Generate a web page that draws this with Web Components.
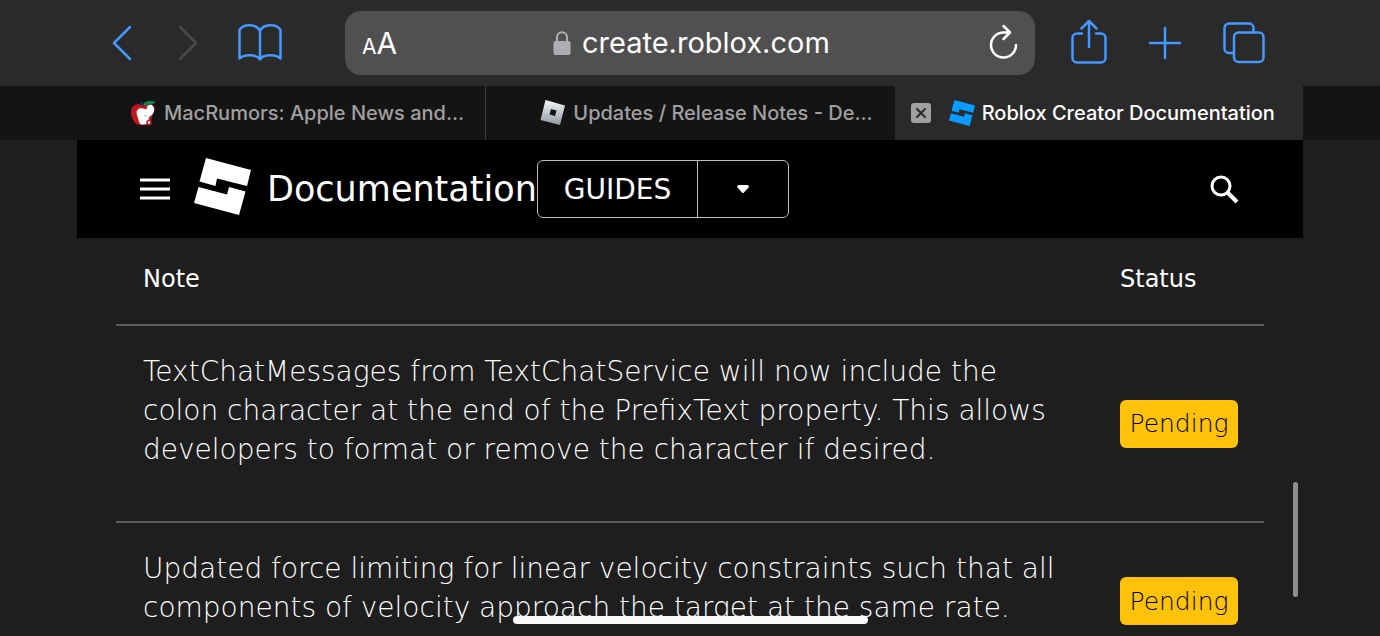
<!DOCTYPE html>
<html lang="en">
<head>
<meta charset="utf-8">
<meta name="viewport" content="width=device-width, initial-scale=1">
<title>Roblox Creator Documentation</title>
<style>
  html, body { margin: 0; height: 100%; }
  body {
    background: #1e1e1e; color: #fff;
    font-family: Inter, "Liberation Sans", sans-serif;
    --docs-font: "DejaVu Sans", sans-serif;
    --safe: 77px; --blue: #4698ff; --bar: #2a2a2a;
  }
</style>
</head>
<body>
<browser-window>
  <browser-toolbar slot="toolbar" address="create.roblox.com"></browser-toolbar>
  <tab-strip slot="tabs">
    <browser-tab icon="apple">MacRumors: Apple News and...</browser-tab>
    <browser-tab icon="roblox">Updates / Release Notes - De...</browser-tab>
    <browser-tab icon="studio" active>Roblox Creator Documentation</browser-tab>
  </tab-strip>
  <docs-header>Documentation</docs-header>
  <release-notes></release-notes>
</browser-window>

<script>
const attach = (el, html) => { el.attachShadow({ mode: 'open' }).innerHTML = html; };
const RESET = `
  *, *::before { box-sizing: border-box; }
  button { font: inherit; color: inherit; background: none; border: 0; padding: 0; margin: 0; cursor: pointer; display: flex; align-items: center; justify-content: center; }
  svg { display: block; flex: none; overflow: visible; }
`;
const STUDIO = 'M12 0 57 12 53 28 23 20.500 21.500 28 5.500 23.500ZM4.500 29 33 36.500 35 29 51.500 33.500 45 57 0 45Z';

customElements.define('browser-window', class extends HTMLElement {
  constructor() {
    super();
    attach(this, `<style>${RESET}
      :host { display: flex; flex-direction: column; height: 100vh; overflow: hidden; position: relative; }
      main { flex: 1; min-height: 0; overflow: hidden; margin: 0 var(--safe); position: relative; }
      .thumb { position: absolute; right: 5px; top: 342px; width: 5px; height: 115px; border-radius: 3px; background: #8e8e8e; }
      .home { position: absolute; left: 50%; bottom: 12px; width: 355px; height: 8px; margin-left: -177px; border-radius: 4px; background: #fafafa; }
    </style>
    <slot name="toolbar"></slot><slot name="tabs"></slot>
    <main><slot></slot><div class="thumb"></div></main>
    <div class="home"></div>`);
  }
});

customElements.define('browser-toolbar', class extends HTMLElement {
  constructor() {
    super();
    attach(this, `<style>${RESET}
      :host { display: grid; grid-template-columns: 1fr 50vw 1fr; align-items: center; height: 86px; flex: none; background: var(--bar); padding: 0 110px; box-sizing: border-box; }
      .side { display: flex; align-items: center; color: var(--blue); }
      .left { gap: 40px; } .right { gap: 42px; padding-right: 5px; justify-content: flex-end; }
      svg { fill: none; stroke: currentColor; stroke-width: 2.500; stroke-linecap: round; stroke-linejoin: round; }
      .off { color: #4a4a4a; }
      form { height: 64px; background: #505050; border-radius: 16px; display: grid; grid-template-columns: 1fr auto 1fr; align-items: center; padding: 0 17px; margin: 0; }
      .size { justify-self: start; align-items: baseline; font-size: 30px; }
      .size small { font-size: 21px; }
      .reload { justify-self: end; }
      .url { display: flex; align-items: center; gap: 11px; padding-left: 3px; }
      input { font: inherit; font-size: 29px; color: #fff; background: none; border: 0; padding: 0 0 2px; width: 248px; height: 40px; outline: none; }
    </style>
    <div class="side left">
      <button aria-label="Back"><svg width="27" height="36" viewBox="0 0 27 36"><path d="M20 2 4 18 20 34"/></svg></button>
      <button class="off" aria-label="Forward"><svg width="21" height="36" viewBox="0 0 21 36"><path d="M3 2 19 18 3 34"/></svg></button>
      <button aria-label="Bookmarks"><svg width="44" height="38" viewBox="0 0 44 38"><path d="M22 7C19 0 6-1 1.500 6V34.500C6 30 19 30 22 35.500 25 30 38 30 42.500 34.500V6C38-1 25 0 22 7ZM22 7V35.500"/></svg></button>
    </div>
    <form>
      <button type="button" class="size" aria-label="Page settings"><small>A</small>A</button>
      <div class="url">
        <svg width="18" height="24" viewBox="0 0 18 24" style="color:#aeaeb2"><path d="M4 11V6.500C4-.5 14-.5 14 6.500V11" stroke-width="2"/><rect x=".5" y="10" width="17" height="14" rx="2" fill="currentColor" stroke="none"/></svg>
        <input type="text" aria-label="Address" spellcheck="false">
      </div>
      <button type="button" class="reload" aria-label="Reload"><svg width="29" height="34" viewBox="0 0 29 34"><path d="M20 6.500H14.500A12.500 12.500 0 1 0 27 19M14.500 0 21 6.500 14.500 13"/></svg></button>
    </form>
    <div class="side right">
      <button aria-label="Share"><svg width="36" height="44" viewBox="0 0 36 44"><path d="M11 12.500H6A4.500 4.500 0 0 0 1.500 17V37A4.500 4.500 0 0 0 6 41.500H30A4.500 4.500 0 0 0 34.500 37V17A4.500 4.500 0 0 0 30 12.500H25M18 26V0M10.500 7.500 18 0 25.500 7.500"/></svg></button>
      <button aria-label="New tab"><svg width="32" height="32" viewBox="0 0 32 32"><path d="M16 1V31M1 16H31"/></svg></button>
      <button aria-label="Show tabs"><svg width="42" height="42" viewBox="0 0 42 42"><path d="M10 31H6A4.500 4.500 0 0 1 1.500 26.500V6A4.500 4.500 0 0 1 6 1.500H26A4.500 4.500 0 0 1 30.500 6V10"/><rect x="11" y="10.500" width="29.500" height="29.500" rx="4.500"/></svg></button>
    </div>`);
  }
  connectedCallback() {
    const i = this.shadowRoot.querySelector('input');
    i.value = this.getAttribute('address');
    i.setAttribute('value', i.value);
  }
});

customElements.define('tab-strip', class extends HTMLElement {
  constructor() {
    super();
    attach(this, `<style>
      :host { display: flex; height: 54px; flex: none; background: #141414; padding: 0 var(--safe); box-sizing: border-box; }
    </style><slot></slot>`);
  }
});

const ICONS = {
  apple: `<svg width="26" height="26" viewBox="0 0 26 26"><path d="M12 6C7 2 0 5 0 12 0 19 5 26 10 25 14 26 18 25 20 20L24 8C23 4 16 3 12 6Z" fill="#c4161c"/><path d="M12 8.500C5 7 4.500 13 7 18 8 23 10 26 13 24 16 26 18 20 18 17 24 14 24.500 8 21 5 17 4 15 8 16 9.500Z" fill="#fff"/><path d="M12 6C12 1 18 0 25 2 23 4 18 5 12 6Z" fill="#12854a"/><path d="M10 2 12 6" stroke="#222d70" stroke-width="2"/><circle cx="18" cy="22.500" r="2" fill="#fff" stroke="#c4161c" stroke-width="1.500"/><path d="M13.500 15 14.500 16.500 15.500 15" stroke="#aaa" fill="none"/></svg>`,
  roblox: `<svg width="26" height="26" viewBox="0 0 26 26"><defs><linearGradient id="g" x1="0" y1="0" x2="0" y2="1"><stop offset="0" stop-color="#f7f7f7"/><stop offset="1" stop-color="#8e9aa4"/></linearGradient></defs><path fill="url(#g)" fill-rule="evenodd" d="M5.500 0 25 5.500 20 25 .5 20ZM11 9 9.500 14.500 15 16 16.500 10.500Z"/></svg>`,
  studio: `<svg width="26" height="26" viewBox="0 0 57 57"><path fill="#0a9bff" d="${STUDIO}"/></svg>`
};

customElements.define('browser-tab', class extends HTMLElement {
  constructor() {
    super();
    attach(this, `<style>${RESET}
      :host { display: flex; align-items: center; flex: 1 1 0; min-width: 0; padding: 0 8px 0 16px; color: #a0a0a0; border-right: 1px solid #3c3c3c; box-sizing: border-box; font-size: 20px; font-weight: 500; }
      :host([active]) { background: var(--bar); color: #fff; border-right: 0; }
      :host(:nth-child(2)) { border-right: 0; }
      .close { width: 20px; height: 20px; border-radius: 3px; background: #a0a0a0; margin-right: 18px; visibility: hidden; flex: none; }
      :host([active]) .close { visibility: visible; }
      .tab { gap: 7px; white-space: nowrap; min-width: 0; }
    </style>
    <button class="close" aria-label="Close tab"><svg width="8" height="8" viewBox="0 0 8 8"><path d="M0 0 8 8M8 0 0 8" stroke="#2a2a2a" stroke-width="2" stroke-linecap="round"/></svg></button>
    <button class="tab">${ICONS[this.getAttribute('icon')]}<span><slot></slot></span></button>`);
  }
});

customElements.define('docs-header', class extends HTMLElement {
  constructor() {
    super();
    attach(this, `<style>${RESET}
      :host { display: flex; align-items: center; height: 98px; background: #000; padding: 0 64px 0 63px; box-sizing: border-box; font-family: var(--docs-font); }
      .menu { margin-right: 24px; }
      a { display: flex; align-items: center; gap: 16px; color: #fff; text-decoration: none; font-size: 35px; }
      a svg { margin-bottom: 6px; }
      .group { display: flex; height: 58px; border: 1px solid #bdbdbd; border-radius: 6px; font-size: 28px; }
      .guides { padding: 0 26px; border-right: 1px solid #bdbdbd; }
      .drop { width: 90px; }
      .search { margin-left: auto; }
    </style>
    <button class="menu" aria-label="Menu"><svg width="30" height="22" viewBox="0 0 30 22"><path d="M0 2H30M0 11H30M0 20H30" stroke="#fff" stroke-width="3"/></svg></button>
    <a href="#"><svg width="57" height="57" viewBox="0 0 57 57"><path fill="#fff" d="${STUDIO}"/></svg><span><slot></slot></span></a>
    <div class="group"><button class="guides">GUIDES</button><button class="drop" aria-label="More sections"><svg width="12" height="8" viewBox="0 0 12 8"><path fill="#fff" d="M0 2Q0 0 2 0H10Q12 0 12 2L7 7.500Q6 8.500 5 7.500Z"/></svg></button></div>
    <button class="search" aria-label="Search"><svg width="29" height="29" viewBox="0 0 29 29" fill="none" stroke="#fff"><circle cx="11" cy="11" r="9" stroke-width="3"/><path d="M17.500 17.500 27 27" stroke-width="4"/></svg></button>`);
  }
});

customElements.define('status-pill', class extends HTMLElement {
  constructor() {
    super();
    attach(this, `<style>
      :host { display: inline-flex; align-items: center; justify-content: center; width: 118px; height: 48px; border-radius: 6px; background: #ffc20a; color: #000; font-size: 25px; font-weight: 200; vertical-align: middle; }
    </style><slot></slot>`);
  }
});

customElements.define('release-notes', class extends HTMLElement {
  constructor() {
    super();
    attach(this, `<style>
      :host { display: block; padding: 0 39px; font-family: var(--docs-font); }
      table { width: 100%; border-collapse: collapse; table-layout: fixed; }
      col.status { width: 171px; }
      th { text-align: left; font-size: 24px; font-weight: 400; line-height: 32px; padding: 25px 27px 29px; }
      td { padding: 26px 27px 52px; font-size: 28px; font-weight: 200; line-height: 39px; vertical-align: top; }
      td:last-child { padding: 0 0 0 27px; vertical-align: middle; }
      tr { border-bottom: 2px solid #5e5e5e; }
    </style>
    <table>
      <colgroup><col><col class="status"></colgroup>
      <thead><tr><th>Note</th><th>Status</th></tr></thead>
      <tbody>
        <tr><td>TextChatMessages from TextChatService will now include the colon character at the end of the PrefixText property. This allows developers to format or remove the character if desired.</td><td><status-pill>Pending</status-pill></td></tr>
        <tr><td>Updated force limiting for linear velocity constraints such that all components of velocity approach the target at the same rate.</td><td><status-pill>Pending</status-pill></td></tr>
      </tbody>
    </table>`);
  }
});
</script>
</body>
</html>
